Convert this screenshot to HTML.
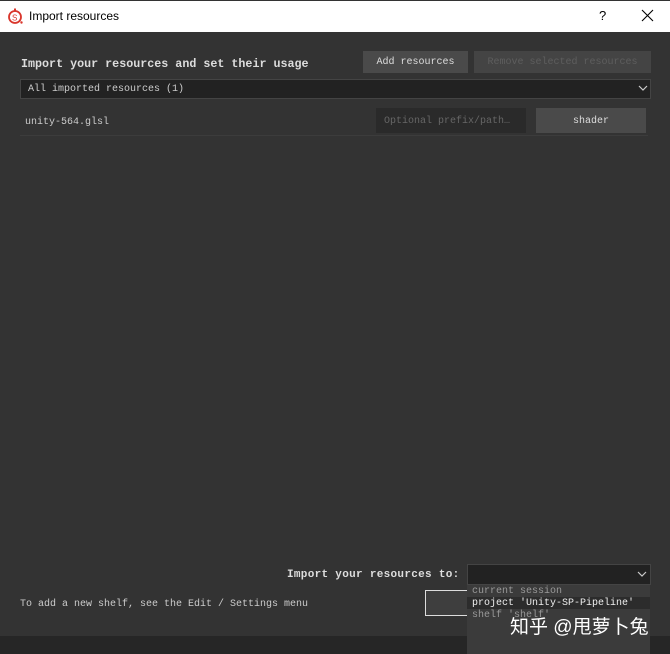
<html><head><style>
body{margin:0;width:670px;height:654px;background:#333;position:relative;overflow:hidden;font-family:"Liberation Mono",monospace;font-size:10px;color:#ccc}
div{position:absolute;box-sizing:border-box}
.t{font-family:"Liberation Sans",sans-serif}
</style></head><body>
<div style="left:0;top:0;width:670px;height:32px;background:#fff;border-top:1px solid #333"></div>
<svg style="position:absolute;left:7px;top:8px" width="16" height="16" viewBox="0 0 16 16"><circle cx="8" cy="9" r="6" fill="none" stroke="#d9352b" stroke-width="1.8"/><rect x="7" y="0.5" width="2" height="3" fill="#d9352b"/><text x="5" y="12.5" font-size="8" fill="#d9352b" font-family="Liberation Sans">S</text><circle cx="14.5" cy="14.5" r="1.2" fill="#d9352b"/></svg>
<div class="t" style="left:29px;top:9px;font-size:12px;color:#000">Import resources</div>
<div class="t" style="left:599px;top:8px;font-size:13px;color:#000">?</div>
<svg style="position:absolute;left:641px;top:9px" width="13" height="13" viewBox="0 0 13 13"><path d="M1 1L12 12M12 1L1 12" stroke="#000" stroke-width="1.1"/></svg>
<div style="left:21px;top:57px;font-weight:bold;font-size:11.7px;color:#ddd">Import your resources and set their usage</div>
<div style="left:363px;top:51px;width:105px;height:22px;background:#4a4a4a;text-align:center;line-height:24px;color:#ddd">Add resources</div>
<div style="left:474px;top:51px;width:177px;height:22px;background:#444;text-align:center;line-height:24px;color:#5e5e5e">Remove selected resources</div>
<div style="left:20px;top:79px;width:631px;height:20px;background:#222;border:1px solid #444;padding-left:7px;line-height:20px;color:#ccc">All imported resources (1)</div>
<svg style="position:absolute;left:638px;top:85px" width="10" height="7" viewBox="0 0 10 7"><path d="M1 1L5 5L9 1" fill="none" stroke="#ccc" stroke-width="1.2"/></svg>
<div style="left:20px;top:106px;width:628px;height:30px;border-bottom:1px solid #3c3c3c"></div>
<div style="left:25px;top:117px;color:#ccc">unity-564.glsl</div>
<div style="left:376px;top:108px;width:150px;height:25px;background:#2a2a2a;padding-left:8px;line-height:27px;color:#666">Optional prefix/path…</div>
<div style="left:536px;top:108px;width:110px;height:25px;background:#4a4a4a;text-align:center;line-height:27px;color:#ddd">shader</div>
<div style="left:287px;top:569px;font-weight:bold;font-size:11px;color:#ddd;letter-spacing:0.3px">Import your resources to:</div>
<div style="left:467px;top:564px;width:184px;height:21px;background:#222;border:1px solid #444"></div>
<svg style="position:absolute;left:637px;top:571px" width="10" height="7" viewBox="0 0 10 7"><path d="M1 1L5 5L9 1" fill="none" stroke="#ccc" stroke-width="1.2"/></svg>
<div style="left:20px;top:599px;color:#ccc">To add a new shelf, see the Edit / Settings menu</div>
<div style="left:425px;top:590px;width:60px;height:26px;border:1px solid #ddd;background:#3e3e3e"></div>
<div style="left:0;top:636px;width:670px;height:18px;background:#262626"></div>
<div style="left:467px;top:585px;width:183px;height:69px;background:#3b3b3b"></div>
<div style="left:467px;top:597px;width:183px;height:12px;background:#2c2c2c"></div>
<div style="left:472px;top:586px;color:#999;line-height:12px">current session</div>
<div style="left:472px;top:598px;color:#eee;line-height:12px">project 'Unity-SP-Pipeline'</div>
<div style="left:472px;top:610px;color:#999;line-height:12px">shelf 'shelf'</div>
<div style="left:510px;top:612px;font-family:'Liberation Sans','Noto Sans CJK SC',sans-serif;font-size:19px;color:#fff">知乎 @甩萝卜兔</div>
</body></html>
